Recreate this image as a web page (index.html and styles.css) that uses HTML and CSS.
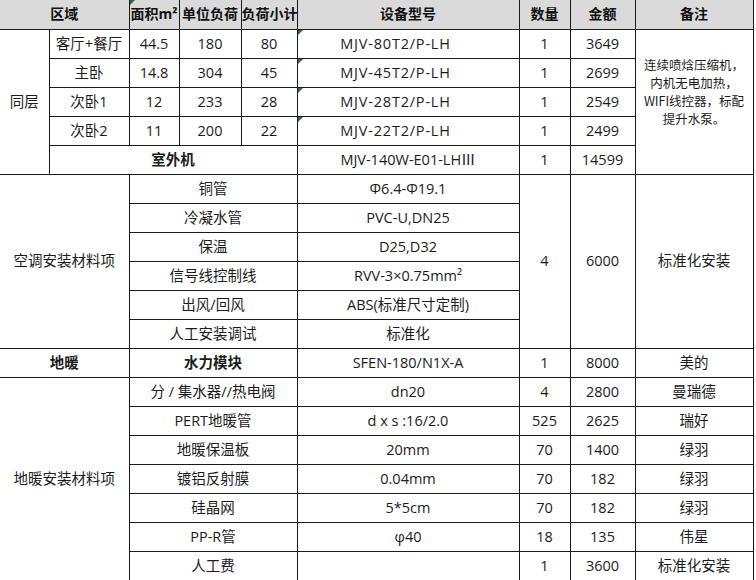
FILE: index.html
```html
<!DOCTYPE html>
<html lang="zh-CN">
<head>
<meta charset="utf-8">
<link rel="stylesheet" href="styles.css">
</head>
<body>
<table class="sheet">
  <colgroup>
    <col class="c1"><col class="c2"><col class="c3"><col class="c4"><col class="c5"><col class="c6"><col class="c7"><col class="c8"><col class="c9">
  </colgroup>
  <thead>
    <tr class="head">
      <th colspan="2" class="first">区域</th>
      <th class="mark">面积m²</th>
      <th>单位负荷</th>
      <th>负荷小计</th>
      <th>设备型号</th>
      <th>数量</th>
      <th>金额</th>
      <th>备注</th>
    </tr>
  </thead>
  <tbody>
    <tr>
      <td rowspan="5" class="first">同层</td>
      <td>客厅+餐厅</td><td>44.5</td><td>180</td><td>80</td>
      <td class="mark model">MJV-80T2/P-LH</td><td>1</td><td>3649</td>
      <td rowspan="5" class="note">连续喷焓压缩机，<br>内机无电加热，<br>WIFI线控器，标配<br>提升水泵。</td>
    </tr>
    <tr>
      <td>主卧</td><td>14.8</td><td>304</td><td>45</td>
      <td class="mark model">MJV-45T2/P-LH</td><td>1</td><td>2699</td>
    </tr>
    <tr>
      <td>次卧1</td><td>12</td><td>233</td><td>28</td>
      <td class="mark model">MJV-28T2/P-LH</td><td>1</td><td>2549</td>
    </tr>
    <tr>
      <td>次卧2</td><td>11</td><td>200</td><td>22</td>
      <td class="mark model">MJV-22T2/P-LH</td><td>1</td><td>2499</td>
    </tr>
    <tr>
      <td colspan="4" class="bold">室外机</td>
      <td>MJV-140W-E01-LHⅢ</td><td>1</td><td>14599</td>
    </tr>
    <tr>
      <td colspan="2" rowspan="6" class="first">空调安装材料项</td>
      <td colspan="3">铜管</td><td>Φ6.4-Φ19.1</td>
      <td rowspan="6">4</td><td rowspan="6">6000</td><td rowspan="6">标准化安装</td>
    </tr>
    <tr><td colspan="3">冷凝水管</td><td>PVC-U,DN25</td></tr>
    <tr><td colspan="3">保温</td><td>D25,D32</td></tr>
    <tr><td colspan="3">信号线控制线</td><td>RVV-3×0.75mm²</td></tr>
    <tr><td colspan="3">出风/回风</td><td>ABS(标准尺寸定制)</td></tr>
    <tr><td colspan="3">人工安装调试</td><td>标准化</td></tr>
    <tr>
      <td colspan="2" class="first bold">地暖</td>
      <td colspan="3" class="bold">水力模块</td>
      <td>SFEN-180/N1X-A</td><td>1</td><td>8000</td><td>美的</td>
    </tr>
    <tr>
      <td colspan="2" rowspan="7" class="first">地暖安装材料项</td>
      <td colspan="3">分 / 集水器//热电阀</td><td>dn20</td><td>4</td><td>2800</td><td>曼瑞德</td>
    </tr>
    <tr><td colspan="3">PERT地暖管</td><td>d x s :16/2.0</td><td>525</td><td>2625</td><td>瑞好</td></tr>
    <tr><td colspan="3">地暖保温板</td><td>20mm</td><td>70</td><td>1400</td><td>绿羽</td></tr>
    <tr><td colspan="3">镀铝反射膜</td><td>0.04mm</td><td>70</td><td>182</td><td>绿羽</td></tr>
    <tr><td colspan="3">硅晶网</td><td>5*5cm</td><td>70</td><td>182</td><td>绿羽</td></tr>
    <tr><td colspan="3">PP-R管</td><td>φ40</td><td>18</td><td>135</td><td>伟星</td></tr>
    <tr><td colspan="3">人工费</td><td></td><td>1</td><td>3600</td><td>标准化安装</td></tr>
  </tbody>
</table>
</body>
</html>
```

FILE: styles.css
```css
html, body {
  margin: 0;
  padding: 0;
  background: #ffffff;
  overflow: hidden;
}

.sheet {
  border-collapse: collapse;
  table-layout: fixed;
  width: 753px;
  font-family: "Open Sans", "Noto Sans CJK SC", sans-serif;
  font-size: 14.5px;
  color: #1c1c1c;
}

.c1 { width: 49px; }
.c2 { width: 80px; }
.c3 { width: 50px; }
.c4 { width: 62px; }
.c5 { width: 56px; }
.c6 { width: 222px; }
.c7 { width: 51px; }
.c8 { width: 65px; }
.c9 { width: 118px; }

.sheet tr {
  height: 29px;
}

.sheet th,
.sheet td {
  border: 1px solid #1a1a1a;
  padding: 0;
  text-align: center;
  vertical-align: middle;
  white-space: nowrap;
  overflow: hidden;
  line-height: 20px;
}

.sheet th {
  border-top: none;
  background: #dadada;
  font-weight: 700;
  font-size: 14px;
  color: #111;
}

.sheet .first {
  border-left: none;
}

.bold {
  font-weight: 700;
}

.sheet .model {
  padding-right: 25px;
  letter-spacing: 0.8px;
}

.sheet .note {
  font-family: "Noto Sans CJK SC", sans-serif;
  font-size: 12.5px;
  line-height: 18px;
  padding-bottom: 20px;
}

.mark {
  position: relative;
}

.mark::before {
  content: "";
  position: absolute;
  left: 0;
  top: 0;
  width: 0;
  height: 0;
  border-top: 5px solid #2e6b3a;
  border-right: 5px solid transparent;
}
```
